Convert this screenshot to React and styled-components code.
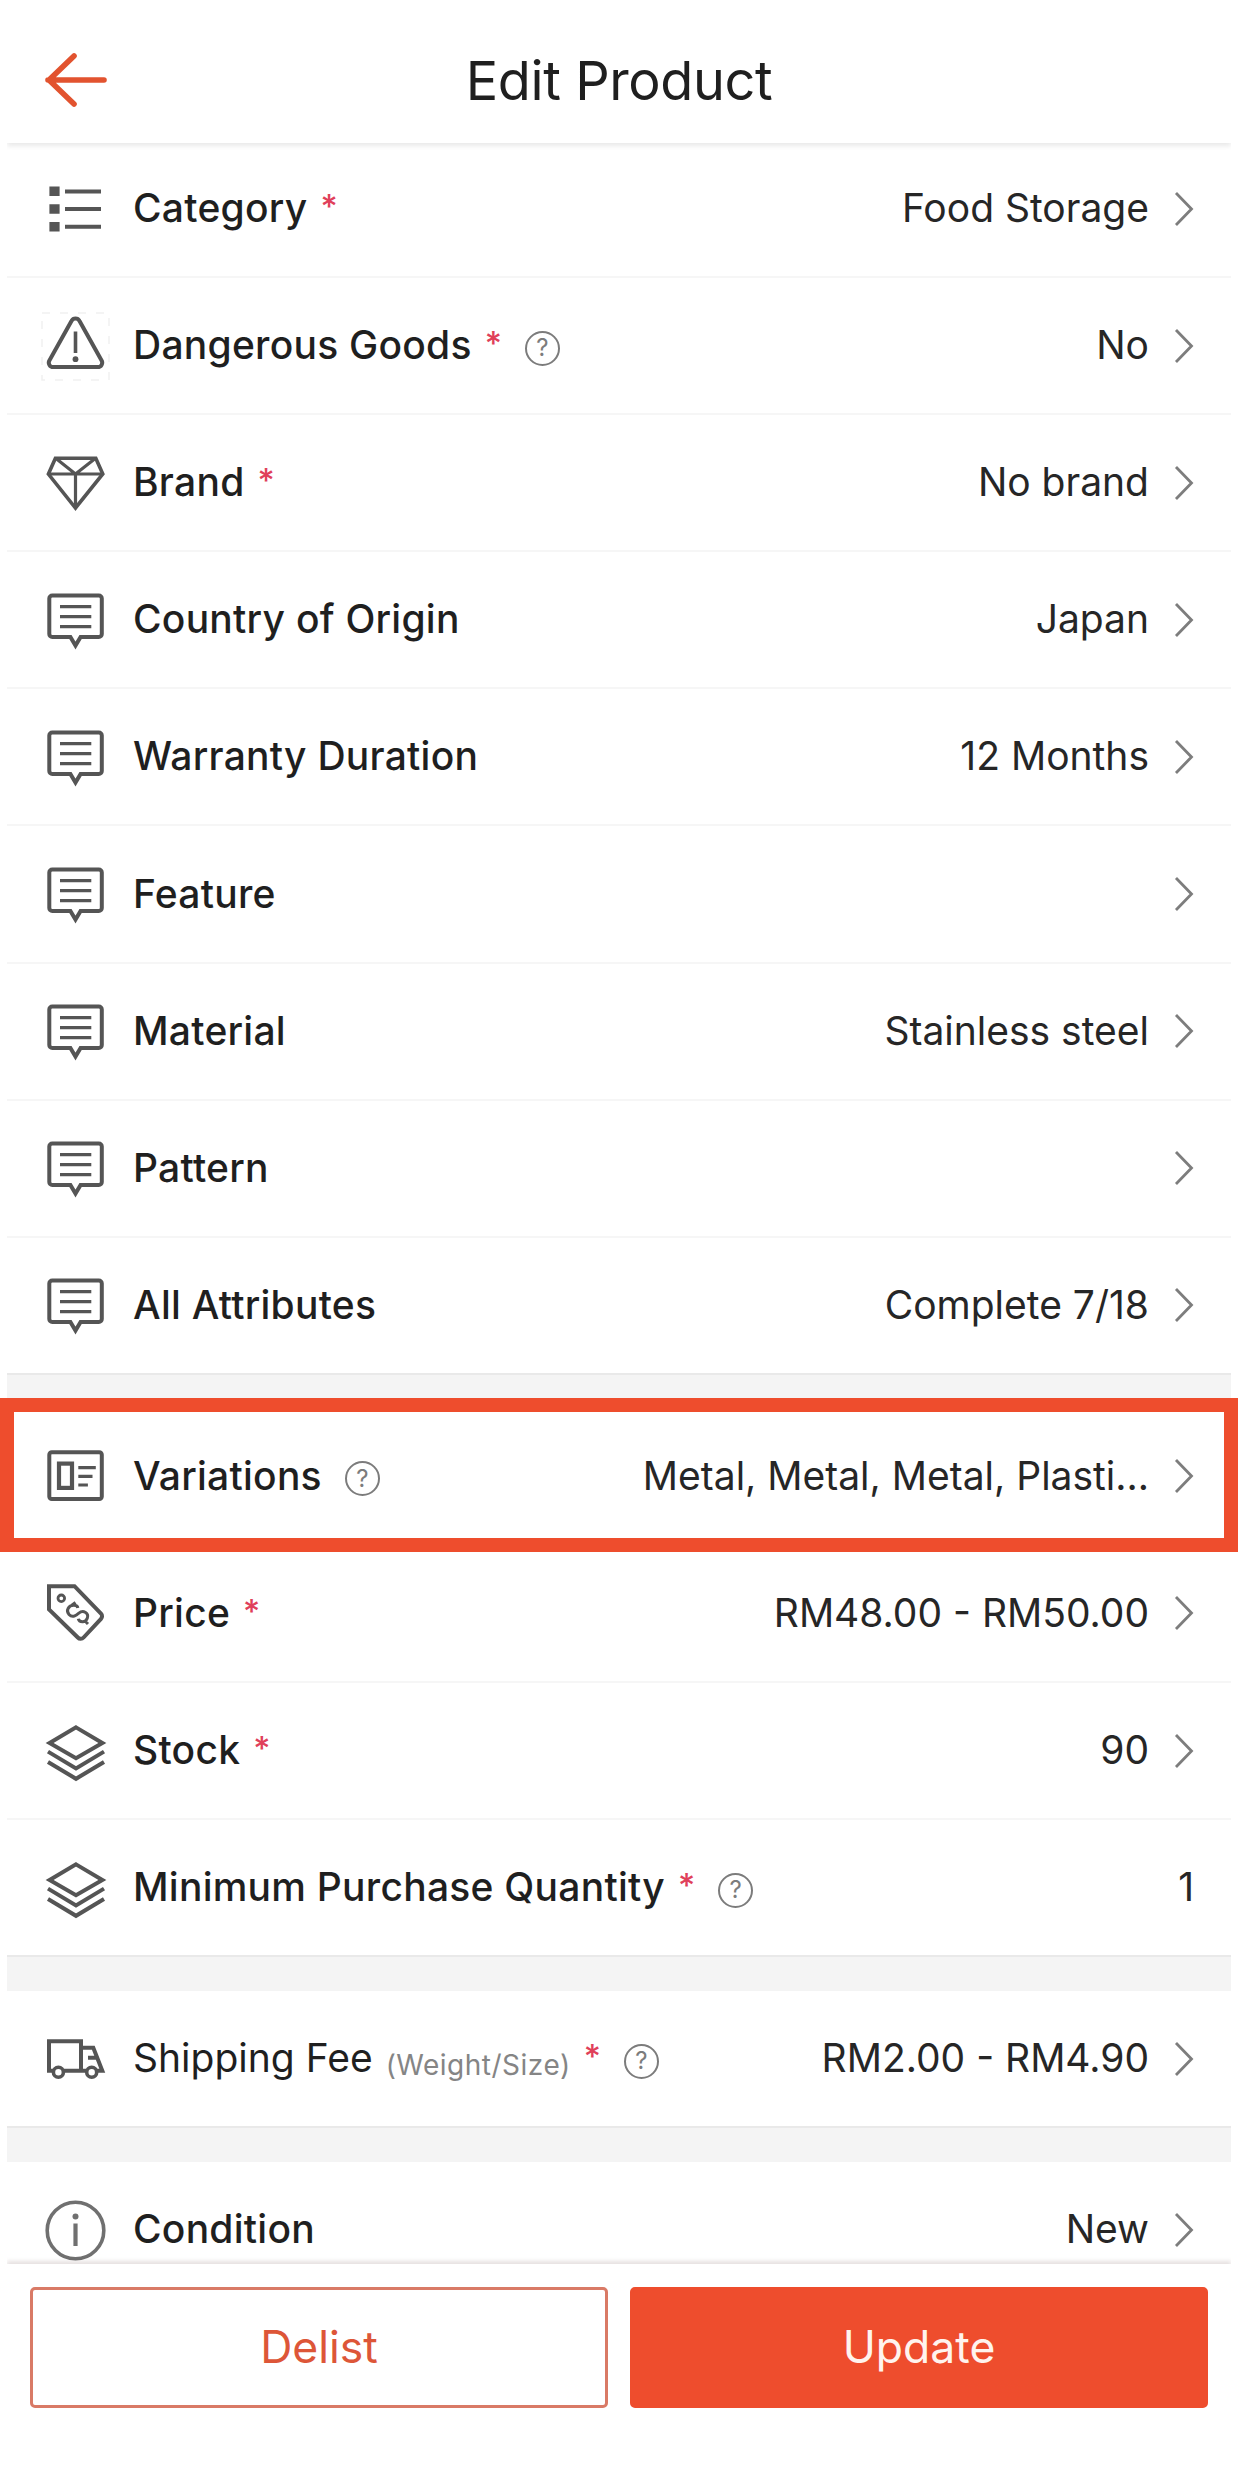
import React from 'react';
import styled, { createGlobalStyle } from 'styled-components';

const ListIcon = () => (
  <Icon viewBox="0 0 64 64">
    <path d="M6.4 9.5h10.2v9.4H6.4zM6.4 27.3h10.2v9.4H6.4zM6.4 45.1h10.2v9.4H6.4z" fill="#555" stroke="none" />
    <path d="M22 14.4h36M22 32h36M22 49.8h36" strokeWidth="4" />
  </Icon>
);

const WarningIcon = () => (
  <Icon viewBox="0 0 64 64">
    <rect x="-1" y="-1" width="67" height="67" stroke="#f1f1f1" strokeWidth="1.5" strokeDasharray="8 10" />
    <path d="M28.6 6.8a4.4 4.4 0 0 1 7.8 0L58.6 46.5a4.4 4.4 0 0 1-3.9 6.6H10.3a4.4 4.4 0 0 1-3.9-6.6z" />
    <path d="M32.5 17.5v21.5" strokeWidth="3.6" />
    <circle cx="32.5" cy="45.2" r="2.9" fill="#555" stroke="none" />
  </Icon>
);

const DiamondIcon = () => (
  <Icon viewBox="0 0 64 64">
    <path d="M12.4 7.2h40.4l7 15.8-27.3 34L5.4 23z" strokeWidth="3.6" />
    <path d="M5.4 23h54.4M13 7.6L32.5 23 52.2 7.6M32.5 23v34" strokeWidth="3.2" />
  </Icon>
);

const NoteIcon = () => (
  <Icon viewBox="0 0 64 64">
    <path d="M9.3 7.5h46.5a3 3 0 0 1 3 3V46a3 3 0 0 1-3 3H37.6l-5.1 8.6-5.1-8.6H9.3a3 3 0 0 1-3-3V10.5a3 3 0 0 1 3-3z" />
    <path d="M17 18.6h31.3M17 28.6h31.3M17 38.7h31.3" strokeWidth="3.2" />
  </Icon>
);

const VariationIcon = () => (
  <Icon viewBox="0 0 64 64">
    <rect x="6.3" y="8.3" width="52.5" height="46.8" rx="2.5" />
    <rect x="16" y="19.6" width="13" height="24.3" strokeWidth="4.2" />
    <path d="M35.3 23.7h17.5M35.3 32.4h14.2M35.3 41h9.6" strokeWidth="3.2" />
  </Icon>
);

const PriceIcon = () => (
  <Icon viewBox="0 0 64 64">
    <path d="M6 5.2h25.5L58 32.5a4 4 0 0 1 0 5.4L40.6 56.5a4 4 0 0 1-5.8 0L6 28.5z" />
    <circle cx="18.3" cy="17.3" r="3.3" strokeWidth="2.8" />
    <path d="M34.8 27c-.3-3.5-7.5-3.8-9.7.5s2.4 9 6.600 7.3c4.5-1.8 5.8-6.3 10.5-3.6 5 3.2 1.5 9.3-2.2 9.6-2.3.1-4.3-.9-4.7-3M28.5 24.5l4-3M41.500 39.500l3.500 3.500" strokeWidth="3" />
  </Icon>
);

const StackIcon = () => (
  <Icon viewBox="0 0 64 64">
    <path d="M33 8.400l26.400 15.600L33 39.200 6.600 24z" />
    <path d="M5 32.600l28 16.800 28-16.800M5 43l28 16.800L61 43" />
  </Icon>
);

const TruckIcon = () => (
  <Icon viewBox="0 0 64 64">
    <path d="M10 43.8H6V14.2h32v29.6H21M38 20.8h12.3l9 23H54M43.4 43.8H38M45 30.8h9" />
    <circle cx="15.4" cy="45.2" r="5" strokeWidth="3.6" />
    <circle cx="48.7" cy="45.2" r="5" strokeWidth="3.6" />
  </Icon>
);

const InfoIcon = () => (
  <Icon viewBox="0 0 64 64" $color="#707070">
    <circle cx="32.5" cy="32.500" r="28.300" strokeWidth="3.600" />
    <circle cx="32.500" cy="18.500" r="3" fill="#707070" stroke="none" />
    <path d="M32.5 25.5V48" strokeWidth="4.2" />
  </Icon>
);

const sections = [
  [
    { label: 'Category', icon: ListIcon, required: true, value: 'Food Storage' },
    { label: 'Dangerous Goods', icon: WarningIcon, required: true, help: true, value: 'No' },
    { label: 'Brand', icon: DiamondIcon, required: true, value: 'No brand' },
    { label: 'Country of Origin', icon: NoteIcon, value: 'Japan' },
    { label: 'Warranty Duration', icon: NoteIcon, value: '12 Months' },
    { label: 'Feature', icon: NoteIcon, value: '' },
    { label: 'Material', icon: NoteIcon, value: 'Stainless steel' },
    { label: 'Pattern', icon: NoteIcon, value: '' },
    { label: 'All Attributes', icon: NoteIcon, value: 'Complete 7/18' },
  ],
  [
    { label: 'Variations', icon: VariationIcon, help: true, value: 'Metal, Metal, Metal, Plasti...', highlight: true },
    { label: 'Price', icon: PriceIcon, required: true, value: 'RM48.00 - RM50.00' },
    { label: 'Stock', icon: StackIcon, required: true, value: '90' },
    { label: 'Minimum Purchase Quantity', icon: StackIcon, required: true, help: true, value: '1', plain: true },
  ],
  [
    { label: 'Shipping Fee', hint: '(Weight/Size)', icon: TruckIcon, required: true, help: true, value: 'RM2.00 - RM4.90', light: true },
  ],
  [
    { label: 'Condition', icon: InfoIcon, value: 'New' },
  ],
];

const ProductRow = ({ item }) => {
  const RowIcon = item.icon;
  return (
    <Row>
      <RowIcon />
      <Label $light={item.light}>{item.label}</Label>
      {item.hint && <Hint>{item.hint}</Hint>}
      {item.required && <Required>*</Required>}
      {item.help && <Help>?</Help>}
      <Value>{item.value}</Value>
      {!item.plain && (
        <Chevron viewBox="0 0 20 36">
          <path d="M2 2l15.5 16L2 34" />
        </Chevron>
      )}
      {item.highlight && <Highlight />}
    </Row>
  );
};

const App = () => {
  return (
    <Page>
      <GlobalStyle />
      <Header>
        <BackButton aria-label="Back">
          <BackArrow viewBox="0 0 64 56">
            <path d="M60 28H4M30 4L5 28l25 24" />
          </BackArrow>
        </BackButton>
        <Title>Edit Product</Title>
      </Header>
      <Content>
        {sections.map((items, index) => (
          <Section key={index}>
            {items.map((item) => (
              <ProductRow key={item.label} item={item} />
            ))}
          </Section>
        ))}
      </Content>
      <Footer>
        <Button>Delist</Button>
        <Button $primary>Update</Button>
      </Footer>
    </Page>
  );
};

const GlobalStyle = createGlobalStyle`
  * {
    box-sizing: border-box;
  }
  body {
    margin: 0;
    background-color: #ffffff;
    font-family: Inter, "Liberation Sans", sans-serif;
  }
`;

const Page = styled.div`
  display: flex;
  flex-direction: column;
  width: 1238px;
  height: 2475px;
  overflow: hidden;
  background-color: #ffffff;
`;

const Header = styled.header`
  display: grid;
  grid-template-columns: 120px 1fr 120px;
  align-items: center;
  flex: none;
  position: relative;
  z-index: 1;
  height: 141px;
  margin: 0 7px;
  padding: 20px 0 0;
  background-color: #ffffff;
  box-shadow: 0 2px 0 #ffffff, 0 5px 5px rgba(0, 0, 0, 0.09);
  clip-path: inset(0 0 -14px 0);
`;

const BackButton = styled.button`
  display: flex;
  padding: 0 0 2px 37px;
  border: none;
  background: none;
`;

const BackArrow = styled.svg`
  width: 64px;
  height: 56px;
  fill: none;
  stroke: #e2532f;
  stroke-width: 5.6;
  stroke-linecap: round;
  stroke-linejoin: round;
`;

const Title = styled.h1`
  margin: 0;
  text-align: center;
  font-size: 54px;
  font-weight: 400;
  letter-spacing: -0.4px;
  line-height: 64px;
  color: #1f1f1f;
`;

const Content = styled.main`
  flex: none;
  height: 2123px;
  padding: 0 7px;
  overflow: hidden;
  background-color: #ffffff;
`;

const Section = styled.section`
  & + & {
    border-top: 34px solid #f4f4f4;
  }
`;

const Row = styled.div`
  display: flex;
  align-items: center;
  position: relative;
  height: 137.1px;
  padding: 0 37px 0 36px;
  border-bottom: 2px solid #f6f6f6;

  &:last-child {
    border-bottom-color: #e9e9e9;
  }
`;

const Icon = styled.svg`
  flex: none;
  width: 64px;
  height: 64px;
  margin-right: 26px;
  overflow: visible;
  fill: none;
  stroke: ${(props) => props.$color || '#555555'};
  stroke-width: 4;
`;

const Label = styled.span`
  padding-bottom: 2px;
  font-size: 39px;
  font-weight: ${(props) => (props.$light ? 400 : 500)};
  letter-spacing: ${(props) => (props.$light ? 0 : '0.25px')};
  white-space: nowrap;
  color: #1f1f1f;
`;

const Hint = styled.span`
  margin-left: 13px;
  padding-top: 13px;
  font-size: 28px;
  letter-spacing: 0.5px;
  color: #858585;
`;

const Required = styled.span`
  margin-left: 13px;
  padding-bottom: 5px;
  font-size: 33px;
  font-weight: 500;
  color: #e0405a;
`;

const Help = styled.span`
  display: flex;
  align-items: center;
  justify-content: center;
  width: 35px;
  height: 35px;
  margin: 5px 0 0 23px;
  border: 2.5px solid #7c7c7c;
  border-radius: 50%;
  font-size: 24px;
  line-height: 1;
  color: #7c7c7c;
`;

const Value = styled.span`
  margin-left: auto;
  padding-bottom: 2px;
  font-size: 39px;
  white-space: nowrap;
  color: #262626;
`;

const Chevron = styled.svg`
  flex: none;
  width: 20px;
  height: 36px;
  margin-left: 25px;
  fill: none;
  stroke: #7d7d7d;
  stroke-width: 2.8;
`;

/* thick frame drawn over the row and the edges of its neighbours */
const Highlight = styled.div`
  position: absolute;
  top: -11px;
  left: -7px;
  right: -7px;
  height: 154px;
  z-index: 1;
  border: 14px solid #ee4d2d;
`;

const Footer = styled.footer`
  display: flex;
  gap: 22px;
  flex: 1;
  align-items: flex-start;
  position: relative;
  z-index: 1;
  margin: 0 7px;
  padding: 23px 23px 0;
  background-color: #ffffff;
  box-shadow: 0 -3px 4px rgba(60, 20, 20, 0.13);
  clip-path: inset(-14px 0 0 0);
`;

const Button = styled.button`
  flex: 1;
  height: 121px;
  padding: 0 0 2px;
  border: 3px solid ${(props) => (props.$primary ? '#ee4d2d' : '#d97a66')};
  border-radius: 5px;
  background-color: ${(props) => (props.$primary ? '#ee4d2d' : '#ffffff')};
  font-family: inherit;
  font-size: 44.5px;
  font-weight: 400;
  color: ${(props) => (props.$primary ? '#fff3ee' : '#dd5638')};
`;

export default App;
